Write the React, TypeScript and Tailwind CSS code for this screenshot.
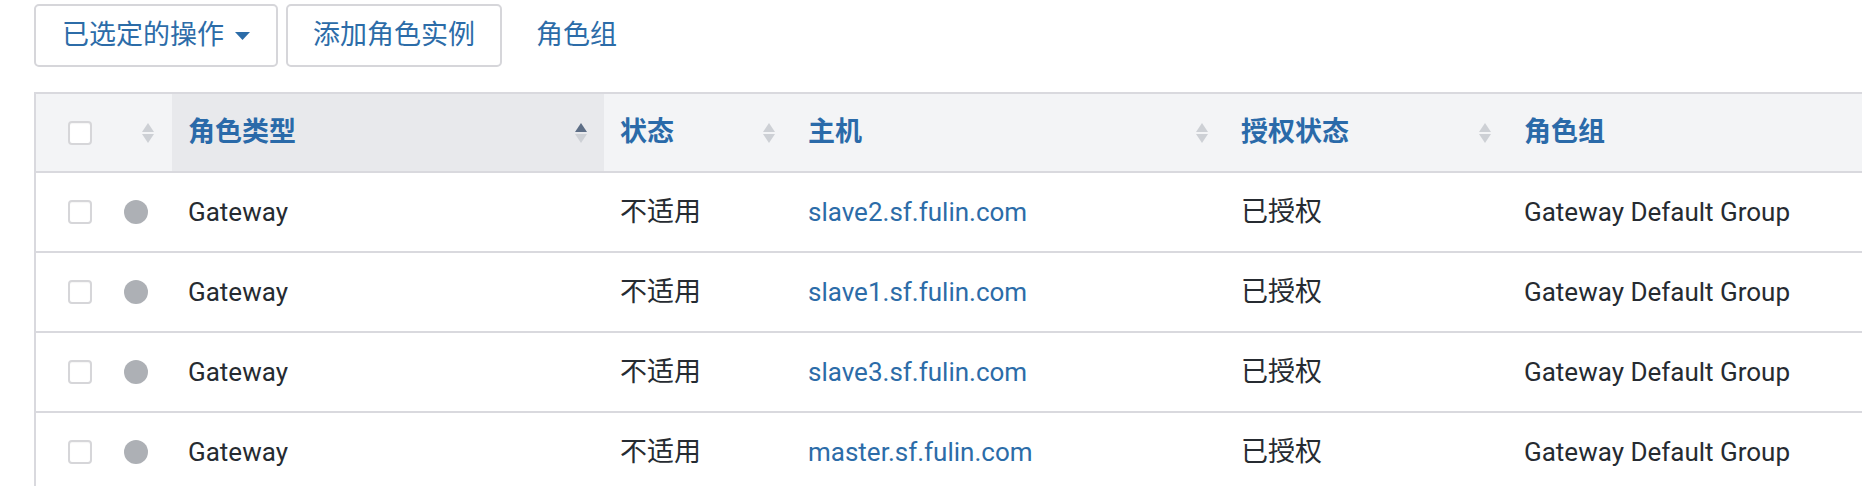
import React from 'react';

const cols = 'grid grid-cols-[72px_64px_432px_188px_433px_283px_1fr]';

const rows = [
  { host: 'slave2.sf.fulin.com' },
  { host: 'slave1.sf.fulin.com' },
  { host: 'slave3.sf.fulin.com' },
  { host: 'master.sf.fulin.com' },
];

function SortIcon({ active = false }: { active?: boolean }) {
  return (
    <svg width="14" height="22" viewBox="0 0 14 22" className="shrink-0">
      <path d="M7 1 L13 10 L1 10 Z" fill={active ? '#5d6e86' : '#cdd0d5'} />
      <path d="M1 12 L13 12 L7 21 Z" fill="#cdd0d5" />
    </svg>
  );
}

function Checkbox() {
  return (
    <span className="block w-[24px] h-[24px] rounded-[4px] border-2 border-[#d6d6d9] bg-white shadow-[inset_0_1px_1px_rgba(0,0,0,0.04)]"></span>
  );
}

function HeadCell({ label, sorted = false }: { label: string; sorted?: boolean }) {
  return (
    <div className={`flex items-center justify-between pl-4 pr-4 ${sorted ? 'bg-[#e8e9ec]' : ''}`}>
      <span className="text-[27px] font-bold text-[#2a6aa9]">{label}</span>
      <SortIcon active={sorted} />
    </div>
  );
}

export default function App() {
  return (
    <div className="bg-white w-[1862px] h-[486px] overflow-hidden pt-[4px] font-[Roboto,'Noto_Sans_CJK_SC',sans-serif] text-[26px] text-[#262b31]">
      {/* toolbar */}
      <div className="flex items-center gap-2 pl-[34px]">
        <button className="flex items-center h-[63px] px-[26px] border-2 border-[#d6d6da] rounded-[5px] bg-white text-[#2c6ca8] text-[27px]">
          已选定的操作
          <svg width="15" height="8" viewBox="0 0 15 8" className="ml-[11px]">
            <path d="M0 0 L15 0 L7.5 8 Z" fill="#2c6ca8" />
          </svg>
        </button>
        <button className="flex items-center h-[63px] px-[25px] border-2 border-[#d6d6da] rounded-[5px] bg-white text-[#2c6ca8] text-[27px]">
          添加角色实例
        </button>
        <button className="flex items-center h-[63px] px-[26px] text-[#2c6ca8] text-[27px]">角色组</button>
      </div>

      {/* table */}
      <div className="ml-[34px] mt-[25px] border-l-2 border-t-2 border-[#d9d9de]">
        <div className={`${cols} h-[79px] bg-[#f3f4f6] border-b-2 border-[#d9d9de]`}>
          <div className="flex items-center pl-[32px]">
            <Checkbox />
          </div>
          <div className="flex items-center justify-end pr-[17px]">
            <SortIcon />
          </div>
          <HeadCell label="角色类型" sorted />
          <HeadCell label="状态" />
          <HeadCell label="主机" />
          <HeadCell label="授权状态" />
          <div className="flex items-center pl-4">
            <span className="text-[27px] font-bold text-[#2a6aa9]">角色组</span>
          </div>
        </div>

        {rows.map((r) => (
          <div key={r.host} className={`${cols} h-[80px] border-b-2 border-[#d9d9de]`}>
            <div className="flex items-center pl-[32px]">
              <Checkbox />
            </div>
            <div className="flex items-center pl-4">
              <span className="block w-[24px] h-[24px] rounded-full bg-[#adb0b5]"></span>
            </div>
            <div className="flex items-center pl-4">Gateway</div>
            <div className="flex items-center pl-4 text-[27px]">不适用</div>
            <div className="flex items-center pl-4 text-[#2c6ca8]">{r.host}</div>
            <div className="flex items-center pl-4 text-[27px]">已授权</div>
            <div className="flex items-center pl-4">Gateway Default Group</div>
          </div>
        ))}
      </div>
    </div>
  );
}
